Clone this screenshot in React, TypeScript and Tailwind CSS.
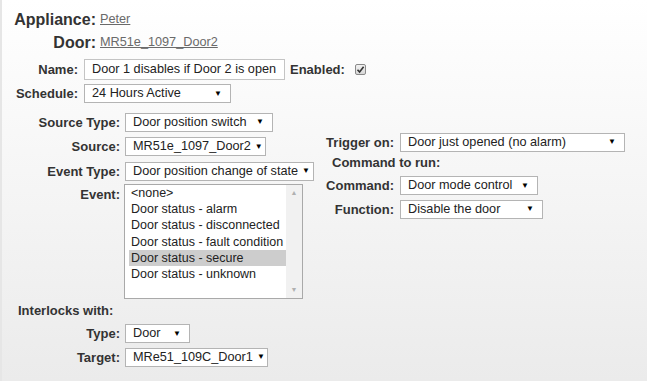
const font = "font-['Liberation_Sans',Arial,sans-serif]";

function Select({ value, width }: { value: string; width: string }) {
  return (
    <div
      className={`flex h-[19px] ${width} items-center justify-between border border-[#b4b4b4] bg-white pl-[7px] pr-[8px] text-[12.7px] leading-[17px] text-[#222]`}
    >
      <span className="whitespace-nowrap">{value}</span>
      <span className="ml-1 text-[8px] leading-none text-black">▼</span>
    </div>
  );
}

function Label({ children, width }: { children: string; width: string }) {
  return (
    <div className={`${width} shrink-0 text-right text-[13px] font-bold text-[#333]`}>
      {children}
    </div>
  );
}

const events = [
  "<none>",
  "Door status - alarm",
  "Door status - disconnected",
  "Door status - fault condition",
  "Door status - secure",
  "Door status - unknown"
];

export default function App() {
  return (
    <div
      className={`${font} h-[381px] w-[647px] overflow-hidden border-l-2 border-[#e6e6e6] bg-gradient-to-b from-white to-[#ebebeb] text-[#333]`}
    >
      <div className="flex flex-col pt-[9px]">
        <div className="flex h-[22px] items-center">
          <div className="w-[94px] shrink-0 text-right text-[16px] font-bold">Appliance:</div>
          <span className="ml-[4px] text-[12.7px] text-[#6a6a6a] underline">Peter</span>
        </div>
        <div className="mt-[1px] flex h-[22px] items-center">
          <div className="w-[94px] shrink-0 text-right text-[16px] font-bold">Door:</div>
          <span className="ml-[4px] text-[12.7px] text-[#6a6a6a] underline">MR51e_1097_Door2</span>
        </div>

        <div className="mt-[5px] flex items-center">
          <Label width="w-[76px]">Name:</Label>
          <div className="ml-[6px] flex h-[21px] w-[201px] items-center whitespace-nowrap border border-[#c4c4c4] bg-white pl-[7px] text-[12.7px] text-[#222]">
            Door 1 disables if Door 2 is open
          </div>
          <div className="ml-[5px] text-[13px] font-bold">Enabled:</div>
          <div className="ml-[10px] flex h-[11px] w-[11px] items-center justify-center rounded-[2px] border border-[#8a8a8a] bg-gradient-to-b from-[#f2f2f2] to-[#d8d8d8]">
            <svg width="9" height="9" viewBox="0 0 9 9">
              <path d="M1.5 4.8 L3.6 7 L7.6 1.8" fill="none" stroke="#333" strokeWidth="1.6" />
            </svg>
          </div>
        </div>

        <div className="mt-[4px] flex items-center">
          <Label width="w-[76px]">Schedule:</Label>
          <div className="ml-[6px]">
            <Select value="24 Hours Active" width="w-[147px]" />
          </div>
        </div>

        <div className="mt-[9px] flex">
          <div className="flex flex-col">
            <div className="flex items-center">
              <Label width="w-[118px]">Source Type:</Label>
              <div className="ml-[5px]">
                <Select value="Door position switch" width="w-[148px]" />
              </div>
            </div>
            <div className="mt-[5px] flex items-center">
              <Label width="w-[118px]">Source:</Label>
              <div className="ml-[5px]">
                <Select value="MR51e_1097_Door2" width="w-[141px]" />
              </div>
            </div>
            <div className="mt-[5px] flex items-center">
              <Label width="w-[118px]">Event Type:</Label>
              <div className="ml-[5px]">
                <Select value="Door position change of state" width="w-[189px]" />
              </div>
            </div>
            <div className="mt-[3px] flex items-start">
              <div className="w-[118px] shrink-0 pt-[1px] text-right text-[13px] font-bold">Event:</div>
              <div className="ml-[4px] flex h-[115px] w-[179px] border border-[#a9a9a9] bg-white">
                <div className="flex min-w-0 flex-1 flex-col pl-[4px] text-[12.5px] leading-[16.2px] text-[#222]">
                  {events.map((e) => (
                    <div
                      key={e}
                      className={`whitespace-nowrap pl-[2px] ${e === "Door status - secure" ? "bg-[#cdcdcd]" : ""}`}
                    >
                      {e}
                    </div>
                  ))}
                </div>
                <div className="flex w-[16px] shrink-0 flex-col items-center justify-between bg-[#f1f1f1] py-[3px] text-[7px] text-[#b0b0b0]">
                  <span>▲</span>
                  <span>▼</span>
                </div>
              </div>
            </div>
          </div>

          <div className="ml-[10px] mt-[20px] flex flex-col">
            <div className="flex items-center">
              <Label width="w-[70px]">Trigger on:</Label>
              <div className="ml-[6px]">
                <Select value="Door just opened (no alarm)" width="w-[225px]" />
              </div>
            </div>
            <div className="mt-[3px] flex h-[16px] items-center pl-[8px] text-[13px] font-bold">
              Command to run:
            </div>
            <div className="mt-[5px] flex items-center">
              <Label width="w-[70px]">Command:</Label>
              <div className="ml-[6px]">
                <Select value="Door mode control" width="w-[138px]" />
              </div>
            </div>
            <div className="mt-[4px] flex items-center">
              <Label width="w-[70px]">Function:</Label>
              <div className="ml-[6px]">
                <Select value="Disable the door" width="w-[143px]" />
              </div>
            </div>
          </div>
        </div>

        <div className="mt-[4px] flex h-[16px] items-center pl-[16px] text-[13px] font-bold">
          Interlocks with:
        </div>
        <div className="mt-[5px] flex items-center">
          <Label width="w-[118px]">Type:</Label>
          <div className="ml-[5px]">
            <Select value="Door" width="w-[65px]" />
          </div>
        </div>
        <div className="mt-[4px] flex items-center">
          <Label width="w-[118px]">Target:</Label>
          <div className="ml-[5px]">
            <Select value="MRe51_109C_Door1" width="w-[143px]" />
          </div>
        </div>
      </div>
    </div>
  );
}
